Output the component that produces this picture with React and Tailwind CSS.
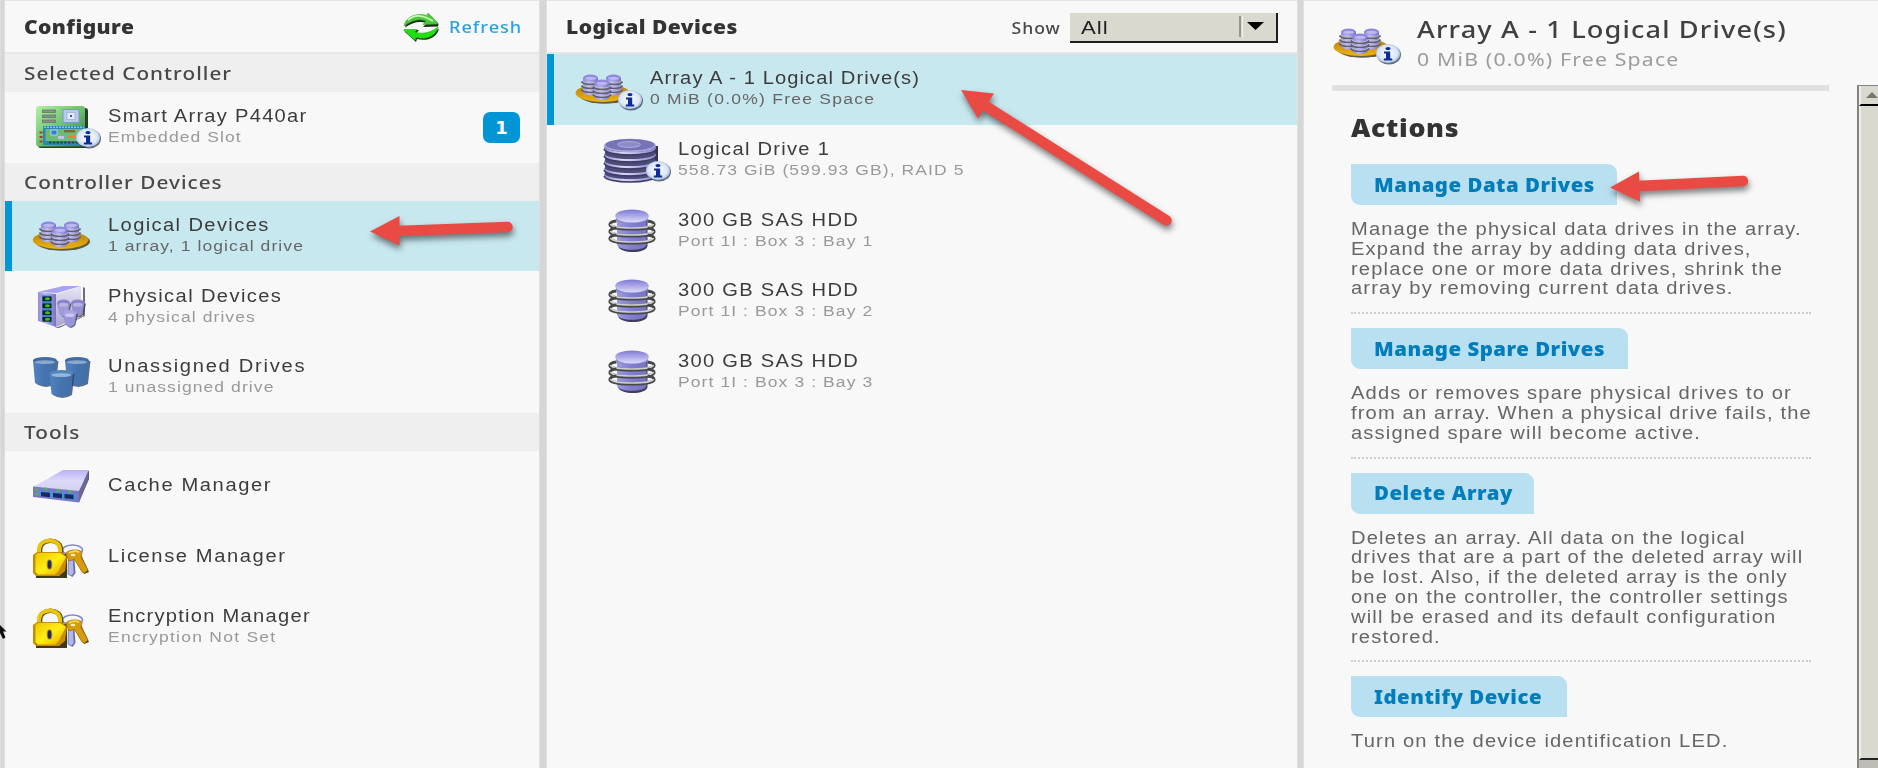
import React from "react";

const InfoBadge = () => (
  <g>
    <ellipse cx="58" cy="34.8" rx="12" ry="9.8" fill="#33405c" opacity="0.75" />
    <ellipse cx="57" cy="33.5" rx="12" ry="9.6" fill="#b9c9e4" />
    <ellipse cx="56.8" cy="33.2" rx="10.8" ry="8.4" fill="url(#badge)" />
    <ellipse cx="57" cy="28.6" rx="2.6" ry="1.7" fill="#0c2c96" />
    <path d="M53 31.4h6.2v7.2h2v1.9h-8.4v-1.9h2.2v-5.2H53z" fill="#0c2c96" />
  </g>
);

const MiniDrive = ({ x, y }) => (
  <g transform={`translate(${x} ${y})`}>
    <path d="M0 3v14c0 5 15 5 15 0V3z" fill="url(#lilac)" />
    <path d="M-1.5 7c2 3.500 16 3.500 18 0M-1.5 11c2 3.500 16 3.500 18 0M-1.5 15c2 3.500 16 3.500 18 0" fill="none" stroke="#5f5f70" strokeWidth="1.900" />
    <path d="M-.5 6.400c2 3 14 3 16 0M-.5 10.400c2 3 14 3 16 0M-.5 14.400c2 3 14 3 16 0" fill="none" stroke="#c6c6d4" strokeWidth="0.900" />
    <ellipse cx="7.500" cy="3" rx="7.300" ry="2.900" fill="#8e88dc" />
    <ellipse cx="7.500" cy="3.800" rx="5.400" ry="1.600" fill="#bdb9f4" />
  </g>
);

const ArrayIcon = ({ info }) => (
  <g>
    <ellipse cx="31.500" cy="28.500" rx={info ? 26 : 27.500} ry="9.200" fill="#4e4326" opacity="0.85" />
    <ellipse cx="29.500" cy="27" rx={info ? 27 : 27.800} ry="9" fill="url(#gold)" />
    <MiniDrive x={10} y={8.5} />
    <MiniDrive x={33} y={8.5} />
    <MiniDrive x={21.500} y={13.500} />
    {info && <InfoBadge />}
  </g>
);

const ControllerIcon = () => (
  <g>
    <rect x="7" y="4" width="50" height="40" rx="3" fill="#26402a" />
    <rect x="5" y="2" width="49" height="40.500" rx="3" fill="url(#board)" />
    <g fill="#8b938d" stroke="#5d6b5f" strokeWidth="0.700">
      <rect x="11.500" y="6" width="13" height="2.400" />
      <rect x="11.500" y="11" width="13" height="2.400" />
      <rect x="11.500" y="16" width="13" height="2.400" />
    </g>
    <rect x="32" y="5.500" width="16" height="13" fill="#b9c9ee" stroke="#7f97c4" />
    <rect x="36" y="8.500" width="8" height="7" fill="#e3ebfb" stroke="#9bb0dc" strokeWidth="0.800" />
    <rect x="39" y="11" width="2" height="2" fill="#41589a" />
    <path d="M12 22h42v19H12z" fill="#2f86b5" />
    <path d="M14.500 25h39v12h-39z" fill="#6dbb77" />
    <path d="M13 23.200h40" stroke="#7cc7f0" strokeWidth="1.400" strokeDasharray="2 1" />
    <rect x="20" y="26" width="6" height="5" fill="#2d7de0" stroke="#bfe0f7" strokeWidth="0.800" />
    <rect x="33" y="26" width="11" height="2.400" fill="#7b6a3c" />
    <rect x="27" y="32" width="6" height="3" fill="#c9bff0" />
    <rect x="37" y="31" width="8" height="3" fill="#f08030" />
    <path d="M18 38.500h32" stroke="#1b4a3a" strokeWidth="2" strokeDasharray="2.400 1.400" />
    <path d="M8.500 28.500h3M8.500 33h3M8.500 37.500h3" stroke="#b33a22" strokeWidth="1.800" />
    <InfoBadge />
  </g>
);

const Bucket = ({ x, y, w, h, fill, top }) => (
  <g transform={`translate(${x} ${y})`}>
    <path d={`M2 4L3.500 ${h - 2}Q${w / 2 + 1} ${h + 4} ${w - 1} ${h - 2}L${w + 1.500} 4z`} fill="#2b3340" opacity="0.7" />
    <path d={`M0 3L2 ${h - 3}Q${w / 2} ${h + 3} ${w - 2} ${h - 3}L${w} 3z`} fill={fill} />
    <ellipse cx={w / 2} cy="3.400" rx={w / 2} ry="3.400" fill={top} />
    <ellipse cx={w / 2} cy="5.200" rx={w / 2 - 2} ry="1.900" fill="#ffffff" opacity="0.4" />
  </g>
);

const PhysicalIcon = () => (
  <g>
    <path d="M24 44l8-3 20-9V3l2 1v28L28 44z" fill="#3f3f52" opacity="0.75" />
    <path d="M7 8L32 2h18l-24 7z" fill="#a9a1f2" />
    <path d="M7 8l18 2v33L7 37z" fill="url(#lilac)" />
    <path d="M25 10L50 2.500V32L25 43z" fill="url(#side)" />
    <path d="M11 11l9.500 1v27L11 36.500z" fill="#3f83c9" />
    <g fill="#141f2b">
      <rect x="11.500" y="12.500" width="9" height="4.600" />
      <rect x="11.500" y="19.500" width="9" height="4.600" />
      <rect x="11.500" y="26.500" width="9" height="4.600" />
      <rect x="11.500" y="33" width="9" height="4.600" />
    </g>
    <g fill="#35c11f">
      <ellipse cx="16.500" cy="14.800" rx="2.600" ry="1.500" />
      <ellipse cx="16.500" cy="21.800" rx="2.600" ry="1.500" />
      <ellipse cx="16.500" cy="28.800" rx="2.600" ry="1.500" />
      <ellipse cx="16.500" cy="35.200" rx="2.600" ry="1.500" />
    </g>
    <Bucket x={26} y={15.500} w={13} h={17} fill="#a09ad6" top="#8a84d0" />
    <Bucket x={40} y={15.500} w={13.500} h={17} fill="#9690d0" top="#8a84d0" />
    <Bucket x={32} y={26} w={13.500} h={17} fill="#9a94dc" top="#a7a1e6" />
  </g>
);

const UnassignedIcon = () => (
  <g>
    <Bucket x={2} y={3} w={24} h={29} fill="url(#blue)" top="#3f6ca6" />
    <Bucket x={34} y={3} w={24} h={29} fill="url(#blue)" top="#3f6ca6" />
    <Bucket x={18.500} y={16} w={23.500} h={27} fill="url(#blue)" top="#5584bd" />
  </g>
);

const CacheIcon = () => (
  <g>
    <path d="M48 39l10-23V8h-2L46 39z" fill="#4b4b66" />
    <path d="M2 24L32 7h26L48 29z" fill="url(#lid)" />
    <path d="M2 23.500L48 28v11.500L2 34z" fill="#7a76c8" />
    <path d="M48 28L57.500 8v8L48 39.500z" fill="#6b6794" />
    <path d="M8 27.500l37 3.200v6.500L8 33z" fill="#4a93d8" />
    <path d="M10 29l9 .8v4.400l-9-1zM22 30l9 .8v4.400l-9-1zM33.500 31l9 .8v4.400l-9-1z" fill="#1b2762" />
    <g fill="#46c62f">
      <circle cx="5.500" cy="26.500" r="1.300" />
      <circle cx="5.500" cy="31" r="1.300" />
      <circle cx="15" cy="26" r="1.400" />
      <circle cx="27" cy="27.200" r="1.400" />
      <circle cx="39" cy="28.300" r="1.400" />
    </g>
  </g>
);

const LockIcon = () => (
  <g>
    <ellipse cx="41.500" cy="16" rx="10" ry="5" fill="none" stroke="#7f86cc" strokeWidth="1.500" />
    <path d="M38 22l5-3 1.500 20-3 4-4-3z" fill="#4c5274" opacity="0.8" />
    <path d="M37.500 20h4.500l1 19-2.500 3-3.500-2z" fill="#b0b8ec" stroke="#6168ad" strokeWidth="0.700" />
    <path d="M8 20v-4.500C8 3 29 3 29 15.500V20" fill="none" stroke="#5c4c12" strokeWidth="4.600" transform="translate(1 .6)" />
    <path d="M8 20v-4.500C8 3.500 29 3.500 29 15.500V20" fill="none" stroke="#e8c50c" strokeWidth="4" />
    <path d="M5 20h31v24H5z" fill="#42391a" />
    <path d="M6 18h25l5 5-2 14-6 5H5l-3-3V21z" fill="#c98d04" />
    <path d="M7 19h22l6 4-8 15-3 2.500H7L4.500 38V21z" fill="url(#lock)" />
    <ellipse cx="18.500" cy="30.500" rx="2.800" ry="5" fill="#9a8a20" />
    <ellipse cx="18.500" cy="30.500" rx="1.700" ry="4.300" fill="#26266e" />
    <path d="M44 23l9 17 5-2-8-17z" fill="#4c3b12" />
    <path d="M35 20c-1-4 14-6 16-1.500L50 23l7 13-3.500 3-2.500-1L43.500 25.500 38 27z" fill="#d79b0b" stroke="#91660a" strokeWidth="0.700" />
    <path d="M38 19c2-2 9-2.500 10-.5" fill="none" stroke="#f5d84b" strokeWidth="1.800" />
    <ellipse cx="42" cy="21" rx="2.400" ry="1.300" fill="#f7f0c4" />
  </g>
);

const LogicalDriveIcon = () => (
  <g>
    <path d="M6 9v30c3 7 49 7 51 0V9z" fill="#34344c" />
    <path d="M4 8v30c2 6 50 6 50 0V8z" fill="#4d4c78" />
    {[9, 16, 23, 30, 36].map((y) => (
      <g key={y}>
        <path d={`M3 ${y}c2 8 50 8 52 0v2.600c-2 8-50 8-52 0z`} fill="url(#disk)" />
        <path d={`M3 ${y + 3}c2 8 50 8 52 0`} fill="none" stroke="#3d3c66" strokeWidth="1.400" />
      </g>
    ))}
    <ellipse cx="29" cy="8.500" rx="26" ry="6.800" fill="#a9a7e3" />
    <ellipse cx="29" cy="7.700" rx="24.500" ry="5.700" fill="#7674b5" />
    <ellipse cx="28" cy="7.500" rx="11.500" ry="2.900" fill="#8d8bca" stroke="#b9b8e6" strokeWidth="0.800" />
    <InfoBadge />
  </g>
);

const HddIcon = () => (
  <g>
    <path d="M17 9v29c2 8 28 8 29.500 0V9z" fill="#3e3d5c" />
    <path d="M16 8v28.500c1 7 29 7 29.500 0V8z" fill="url(#barrel)" />
    {[17, 24, 31].map((y) => (
      <g key={y} fill="none">
        <path d={`M15.500 ${y - 4}c-5 .5-6.500 1.500-6.500 3.500 0 6 44 6 44 0 0-2-3-3-6.500-3.500`} stroke="#484848" strokeWidth="3.200" />
        <path d={`M9.500 ${y - 1}c1.500 5.300 41.500 5.300 43 0`} stroke="#cfcfcf" strokeWidth="1.600" />
      </g>
    ))}
    <path d="M15 8c0 8 32 8 32 0v4c-3 4-29 4-32 0z" fill="#8583d2" />
    <ellipse cx="31" cy="8" rx="16.800" ry="6.600" fill="url(#cap)" />
  </g>
);

const icons = {
  array: <ArrayIcon />,
  arrayInfo: <ArrayIcon info />,
  controller: <ControllerIcon />,
  physical: <PhysicalIcon />,
  unassigned: <UnassignedIcon />,
  cache: <CacheIcon />,
  lock: <LockIcon />,
  logicalDrive: <LogicalDriveIcon />,
  hdd: <HddIcon />,
};

const DeviceIcon = ({ name }) => (
  <svg className="w-[72px] h-[46px] shrink-0" viewBox="0 0 72 46">
    {icons[name]}
  </svg>
);

// Gradients shared by all of the device icons
const Gradients = () => (
  <svg className="absolute w-0 h-0">
    <defs>
      <linearGradient id="gold" x1="0" y1="0" x2="0" y2="1">
        <stop offset="0" stopColor="#a97f14" />
        <stop offset="0.6" stopColor="#d89e0c" />
        <stop offset="1" stopColor="#eeb40a" />
      </linearGradient>
      <linearGradient id="lilac" x1="0" y1="0" x2="1" y2="0">
        <stop offset="0" stopColor="#8f8bd8" />
        <stop offset="0.4" stopColor="#bdb8f2" />
        <stop offset="1" stopColor="#7672c0" />
      </linearGradient>
      <linearGradient id="side" x1="0" y1="0" x2="0" y2="1">
        <stop offset="0" stopColor="#e6e4f4" />
        <stop offset="1" stopColor="#a9a6d0" />
      </linearGradient>
      <linearGradient id="lid" x1="0" y1="0" x2="0" y2="1">
        <stop offset="0" stopColor="#b8b1f8" />
        <stop offset="0.5" stopColor="#dcdaf8" />
        <stop offset="1" stopColor="#d2cff0" />
      </linearGradient>
      <linearGradient id="board" x1="0" y1="0" x2="1" y2="1">
        <stop offset="0" stopColor="#b3f0a6" />
        <stop offset="0.5" stopColor="#6cc26c" />
        <stop offset="1" stopColor="#2b7a45" />
      </linearGradient>
      <linearGradient id="blue" x1="0" y1="0" x2="1" y2="0">
        <stop offset="0" stopColor="#4f83c0" />
        <stop offset="0.5" stopColor="#4473ae" />
        <stop offset="1" stopColor="#3f6fab" />
      </linearGradient>
      <linearGradient id="lock" x1="0" y1="0" x2="1" y2="1">
        <stop offset="0" stopColor="#eec500" />
        <stop offset="0.5" stopColor="#ffee14" />
        <stop offset="1" stopColor="#e3a400" />
      </linearGradient>
      <linearGradient id="disk" x1="0" y1="0" x2="1" y2="0">
        <stop offset="0" stopColor="#8a88cc" />
        <stop offset="0.35" stopColor="#dcdafc" />
        <stop offset="1" stopColor="#8886c8" />
      </linearGradient>
      <linearGradient id="barrel" x1="0" y1="0" x2="1" y2="0">
        <stop offset="0" stopColor="#9a99e0" />
        <stop offset="0.5" stopColor="#7f7ecf" />
        <stop offset="1" stopColor="#7776c4" />
      </linearGradient>
      <linearGradient id="cap" x1="0" y1="0" x2="0" y2="1">
        <stop offset="0" stopColor="#7c78d6" />
        <stop offset="1" stopColor="#dedcfa" />
      </linearGradient>
      <radialGradient id="badge">
        <stop offset="0" stopColor="#ffffff" />
        <stop offset="1" stopColor="#d6e2f4" />
      </radialGradient>
    </defs>
  </svg>
);

const RefreshIcon = () => (
  <svg className="w-[38px] h-[30px]" viewBox="0 0 38 30">
    <g fill="#16301a" transform="translate(1 1.500)">
      <path d="M2 14C4 4 15 .5 25 3.500L26 1l9.500 9.500-.5 2.500-15 .500 4-4C16 7 9 9 2 14z" />
      <path d="M36 15c-2 10-13 13-22 10.500l-1 3L2 18.500v-2h14l-3 3.500c8 3 17 0 23-5z" />
    </g>
    <path d="M2 14C4 4 15 .5 25 3.500L26 1l9.500 9.500-.5 1.500-14 .500 3-3.500C16 6 9 9 2 14z" fill="#49c93a" stroke="#3fae35" strokeWidth="0.600" />
    <path d="M6 8c5-4.500 12-5 18-2.500L31 9" fill="none" stroke="#c8f7b8" strokeWidth="1.800" />
    <path d="M36 15c-2 10-13 13-22 10.500l-1 3L2 18.500v-1h13l-2 2.500c8 3 17 0 23-5z" fill="#20e012" stroke="#1fae1a" strokeWidth="0.600" />
  </svg>
);

const Row = ({ icon, title, sub, active, nested, badge, spacing = "tracking-[1.1px]", subSpacing = "tracking-[0.87px]" }) => (
  <div
    className={`flex items-center h-[70.67px] shrink-0 border-l-[7px] ${
      active ? "bg-[#c8e8ef] border-[#0096d6]" : "border-transparent"
    } ${nested ? "pl-[47px]" : "pl-[19px]"}`}
  >
    <DeviceIcon name={icon} />
    <div className="ml-[5px] pb-[1px] flex-1 flex flex-col items-start whitespace-nowrap">
      <span className={`origin-left scale-x-[1.15] text-[17.5px] leading-5 text-[#3c3c3c] ${spacing}`}>{title}</span>
      {sub && (
        <span className={`origin-left scale-x-[1.25] mt-[1px] text-[14px] leading-5 ${subSpacing} ${active ? "text-[#666]" : "text-[#999]"}`}>
          {sub}
        </span>
      )}
    </div>
    {badge && (
      <div className="w-[37px] h-[31px] mr-[19px] rounded-[7px] bg-[#0096d6] text-white text-[18px] leading-[31px] font-bold text-center font-['DejaVu_Sans',sans-serif]">
        {badge}
      </div>
    )}
  </div>
);

const SectionTitle = ({ children }) => (
  <div className="h-[38px] shrink-0 pl-[19px] pt-[1px] bg-[#efefef] flex items-center text-[18px] font-medium tracking-[0.9px] text-[#484848] font-['Noto_Sans',sans-serif]">
    <span className="origin-left scale-x-[1.15]">{children}</span>
  </div>
);

const Action = ({ label, lines, width, last }) => (
  <div className={last ? "" : "border-b-2 border-dotted border-[#cdcdcd] pb-[13px] mb-[14px] w-[460px]"}>
    <div
      className="h-[41px] pl-[23px] flex items-center whitespace-nowrap rounded-tr-[9px] rounded-bl-[9px] bg-[#b8e0f0] text-[#007dba] text-[20px] font-black tracking-[0.5px] font-['Noto_Sans',sans-serif]"
      style={{ width }}
    >
      <span className="origin-left scale-x-[1.02]">{label}</span>
    </div>
    <p className="mt-[15px] w-max origin-left scale-x-[1.15] whitespace-nowrap text-[17.5px] leading-[19.8px] tracking-[1px] text-[#666]">
      {lines.map((line) => (
        <span key={line} className="block">{line}</span>
      ))}
    </p>
  </div>
);

const actions = [
  {
    label: "Manage Data Drives",
    width: 266,
    lines: [
      "Manage the physical data drives in the array.",
      "Expand the array by adding data drives,",
      "replace one or more data drives, shrink the",
      "array by removing current data drives.",
    ],
  },
  {
    label: "Manage Spare Drives",
    width: 277,
    lines: [
      "Adds or removes spare physical drives to or",
      "from an array. When a physical drive fails, the",
      "assigned spare will become active.",
    ],
  },
  {
    label: "Delete Array",
    width: 183,
    lines: [
      "Deletes an array. All data on the logical",
      "drives that are a part of the deleted array will",
      "be lost. Also, if the deleted array is the only",
      "one on the controller, the controller settings",
      "will be erased and its default configuration",
      "restored.",
    ],
  },
  {
    label: "Identify Device",
    width: 216,
    lines: ["Turn on the device identification LED."],
  },
];

const Gutter = ({ className }) => (
  <div className={`shrink-0 bg-[#d6d6d6] border-x border-[#dfdfdf] ${className}`}></div>
);

// Red callout arrows and the mouse pointer that lie over the page
const Overlay = () => (
  <svg className="absolute inset-0 w-[1878px] h-[768px] pointer-events-none" viewBox="0 0 1878 768">
    <g fill="#e94b44" stroke="#e94b44" className="drop-shadow-[1px_4px_3px_rgba(0,0,0,0.5)]">
      <path d="M370 231.500L399.500 216v29.500z" stroke="none" />
      <path d="M398 231L507.500 227" strokeWidth="10.500" strokeLinecap="round" />
      <path d="M961 90l33 3.500-16 25z" stroke="none" />
      <path d="M984 105l182.500 115.500" strokeWidth="10.500" strokeLinecap="round" />
      <path d="M1610 187.500l29-16 1 30z" stroke="none" />
      <path d="M1638 186l105-5" strokeWidth="10.500" strokeLinecap="round" />
    </g>
    <path d="M0 625l6.500 6.500H3l2.500 6L3 639l-3-6z" fill="#111" />
  </svg>
);

const App = () => {
  return (
    <div className="relative flex w-[1878px] h-[768px] overflow-hidden bg-[#f8f8f8] font-['Liberation_Sans',Arial,sans-serif]">
      <Gradients />
      <Gutter className="w-[5px]" />

      {/* Configure */}
      <div className="w-[534px] shrink-0 flex flex-col border-t border-[#e4e4e4]">
        <div className="h-[53px] shrink-0 border-b-2 border-[#e6e6e6] pl-[19px] pr-[19px] flex items-center">
          <h1 className="origin-left scale-x-[1.05] text-[20px] font-black tracking-[0.4px] text-[#333] font-['Noto_Sans',sans-serif]">Configure</h1>
          <div className="ml-auto flex items-center gap-[9px]">
            <RefreshIcon />
            <span className="w-[71px] pt-[1px] text-[16.5px] font-medium text-[#2aa3da] font-['Noto_Sans',sans-serif]">
              <span className="inline-block origin-left scale-x-[1.1] tracking-[0.9px]">Refresh</span>
            </span>
          </div>
        </div>
        <SectionTitle>Selected Controller</SectionTitle>
        <Row icon="controller" title="Smart Array P440ar" sub="Embedded Slot" badge="1" />
        <SectionTitle>Controller Devices</SectionTitle>
        <Row icon="array" title="Logical Devices" sub="1 array, 1 logical drive" spacing="tracking-[1.2px]" active />
        <Row icon="physical" title="Physical Devices" sub="4 physical drives" spacing="tracking-[1.2px]" />
        <Row icon="unassigned" title="Unassigned Drives" sub="1 unassigned drive" spacing="tracking-[1.5px]" />
        <SectionTitle>Tools</SectionTitle>
        <Row icon="cache" title="Cache Manager" spacing="tracking-[1.4px]" />
        <Row icon="lock" title="License Manager" spacing="tracking-[1.4px]" />
        <Row icon="lock" title="Encryption Manager" sub="Encryption Not Set" subSpacing="tracking-[1px]" />
      </div>
      <Gutter className="w-[8px]" />

      {/* Logical Devices */}
      <div className="w-[750px] shrink-0 flex flex-col border-t border-[#e4e4e4]">
        <div className="h-[53px] shrink-0 border-b-2 border-[#e6e6e6] pl-[19px] pr-[19px] flex items-center">
          <h1 className="origin-left scale-x-[1.05] text-[20px] font-black tracking-[0.4px] text-[#333] font-['Noto_Sans',sans-serif]">Logical Devices</h1>
          <span className="ml-auto mr-[9px] pt-[2px] origin-right scale-x-[1.1] text-[16px] font-medium tracking-[0.9px] text-[#484848] font-['Noto_Sans',sans-serif]">Show</span>
          <div className="w-[208px] h-[30px] mt-[2px] bg-[#d9d9d0] border-r-2 border-b-2 border-[#1d1d1d] flex items-center pl-[11px]">
            <span className="pt-[3px] origin-left scale-x-[1.2] text-[18.5px] tracking-[0.8px] text-[#222]">All</span>
            <div className="ml-auto w-[4px] h-[21px] border-l-2 border-r border-l-[#96968e] border-r-[#f4f4ee]"></div>
            <svg className="ml-[4px] mr-[12px] mb-[2px] w-[17px] h-[8px]" viewBox="0 0 17 8">
              <path d="M0 0h17L8.500 8z" fill="#000" />
            </svg>
          </div>
        </div>
        <Row icon="arrayInfo" title="Array A - 1 Logical Drive(s)" sub="0 MiB (0.0%) Free Space" spacing="tracking-[0.95px]" subSpacing="tracking-[1px]" active />
        <Row icon="logicalDrive" title="Logical Drive 1" sub="558.73 GiB (599.93 GB), RAID 5" nested />
        <Row icon="hdd" title="300 GB SAS HDD" sub="Port 1I : Box 3 : Bay 1" nested />
        <Row icon="hdd" title="300 GB SAS HDD" sub="Port 1I : Box 3 : Bay 2" nested />
        <Row icon="hdd" title="300 GB SAS HDD" sub="Port 1I : Box 3 : Bay 3" nested />
      </div>
      <Gutter className="w-[7px]" />

      {/* Actions */}
      <div className="flex-1 flex flex-col border-t border-[#e4e4e4]">
        <div className="h-[84px] shrink-0 pl-[27px] pt-[19px] flex items-start font-['Noto_Sans',sans-serif] whitespace-nowrap">
          <DeviceIcon name="arrayInfo" />
          <div className="ml-[14px] -mt-[7px]">
            <h2 className="origin-left scale-x-[1.155] text-[23.5px] leading-[32px] font-medium tracking-[1px] text-[#404040]">Array A - 1 Logical Drive(s)</h2>
            <p className="mt-[2px] w-max origin-left scale-x-[1.18] text-[18px] leading-[25px] tracking-[1px] text-[#9c9c9c]">0 MiB (0.0%) Free Space</p>
          </div>
        </div>
        <div className="flex flex-1 min-h-0">
          <div className="w-[553px] shrink-0 pl-[28px] overflow-hidden">
            <div className="w-[497px] h-[6px] bg-[#e2e2e2]"></div>
            <div className="pl-[19px] pt-[18px]">
              <h2 className="h-[55px] origin-left scale-x-[1.07] text-[25px] leading-[36px] font-black tracking-[0.6px] text-[#333] font-['Noto_Sans',sans-serif]">Actions</h2>
              {actions.map((a, i) => (
                <Action key={a.label} {...a} last={i === actions.length - 1} />
              ))}
            </div>
          </div>
          {/* Scrollbar */}
          <div className="flex-1 flex flex-col border-l-2 border-t border-[#85857f] bg-[#d9d9d0]">
            <div className="h-[20px] shrink-0 border-b-2 border-l-2 border-b-black border-l-[#efefe9] flex items-center pl-[5px]">
              <svg className="w-[12px] h-[6px]" viewBox="0 0 12 6">
                <path d="M6 0l6 6H0z" fill="#77776f" />
              </svg>
            </div>
            <div className="flex-1 border-l-2 border-b-2 border-b-[#222] border-l-[#efefe9]"></div>
            <div className="h-[8px] shrink-0 bg-[#bdbdb5]"></div>
          </div>
        </div>
      </div>

      <Overlay />
    </div>
  );
};

export default App;
